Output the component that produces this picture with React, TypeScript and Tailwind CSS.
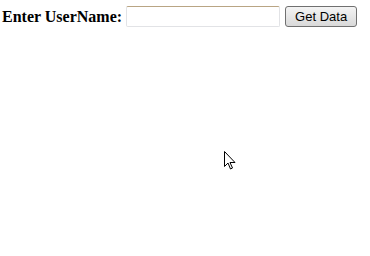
import React from 'react'

export default function App() {
  return (
    <div className="relative h-[256px] w-[370px] bg-white">
      <div className="flex items-center pl-[2px] pt-[6px]">
        <span className="font-['Liberation_Serif',serif] text-[16px] font-bold leading-[21px] text-black">Enter UserName:</span>
        <input
          className="ml-[4px] h-[21px] w-[154px] rounded-[2px] border border-[#e2e3e6] border-t-[#b9a584] bg-white px-1 outline-none"
        />
        <button className="ml-[5px] h-[21px] w-[72px] rounded-[3px] border border-[#707070] bg-gradient-to-b from-[#f4f4f4] to-[#d9d9d9] font-['Liberation_Sans',sans-serif] text-[13px] leading-[19px] text-black">
          Get Data
        </button>
      </div>
      <svg className="absolute left-[224px] top-[151px]" width="13" height="20" viewBox="0 0 13 20">
        <path d="M0.5 0.5 L0.5 15.5 L4 12 L6.5 18 L8.5 17 L6 11.5 L11 11.5 Z" fill="white" stroke="black" strokeWidth="1" strokeLinejoin="miter" />
      </svg>
    </div>
  )
}
